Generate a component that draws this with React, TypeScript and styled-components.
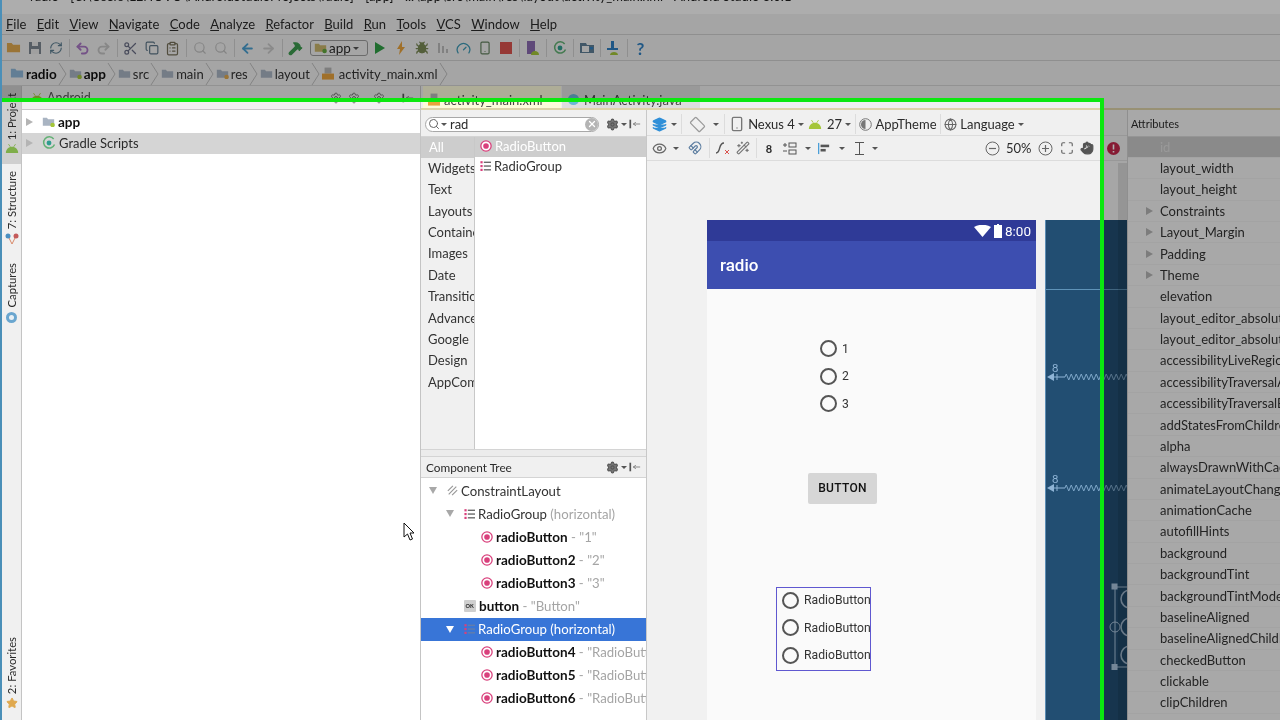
import * as React from 'react';
import styled, { createGlobalStyle } from 'styled-components';
import {
  Bug, Copy, Eye, Gauge, Globe, Hand, Layers, Magnet, Maximize, RefreshCw,
  Scissors, Search, Settings, Smartphone, Wand2, X, ClipboardList, Undo2, Redo2,
  ArrowLeft, ArrowRight, Hammer, Star,
} from 'lucide-react';

const GlobalStyle = createGlobalStyle`
  html, body { margin: 0; padding: 0; background: #f0f0f0; }
  body { font-family: Lato, "Open Sans", "Liberation Sans", sans-serif; font-size: 13px; color: #2b2b2b; }
  * { box-sizing: border-box; }
  svg { flex: none; }
`;

const Screen = styled.div`
  position: relative;
  width: 1280px;
  height: 720px;
  overflow: hidden;
  display: flex;
  flex-direction: column;
  background: #f0f0f0;
  border-left: 2px solid #4a8fb8;
  filter: blur(0.3px);
`;

// spotlight: everything outside the green frame gets dimmed
const Spotlight = styled.div`
  position: absolute;
  left: -20px;
  top: 98px;
  width: 1122px;
  height: 680px;
  border: 4px solid #0be80f;
  box-shadow: 0 0 0 1400px rgba(0, 0, 0, 0.31);
  pointer-events: none;
`;

const Cursor = styled.svg`
  position: absolute;
  left: 401px;
  top: 522px;
`;

const TitleBar = styled.div`
  height: 14px;
  flex: none;
  overflow: hidden;
  padding-left: 28px;
  white-space: nowrap;
  color: #222;
  background: #fbfbfb;
`;

const TitleText = styled.div`
  margin-top: -14px;
  line-height: 20px;
`;

const MenuBar = styled.div`
  height: 21px;
  flex: none;
  display: flex;
  align-items: center;
  gap: 10.4px;
  padding-left: 4px;
  border-bottom: 1px solid #cfcfcf;
`;

const MenuItem = styled.span`
  &::first-letter { text-decoration: underline; }
`;

const ToolBar = styled.div`
  height: 26px;
  flex: none;
  display: flex;
  align-items: center;
  padding: 1px 0 0 1px;
  border-bottom: 1px solid #cfcfcf;
`;

const Tool = styled.span`
  width: 21px;
  height: 20px;
  flex: none;
  display: flex;
  align-items: center;
  justify-content: center;
`;

const HelpMark = styled(Tool)`
  font-size: 17px;
  font-weight: 700;
  color: #2f7fc1;
`;

const ToolSep = styled.span`
  width: 1px;
  height: 18px;
  flex: none;
  margin: 0 2.5px;
  background: #cfcfcf;
`;

const RunConfig = styled.span`
  width: 58px;
  height: 16px;
  flex: none;
  margin: 0 1px 0 4px;
  display: flex;
  align-items: center;
  gap: 2px;
  padding-left: 3px;
  font-size: 13.5px;
  border: 1px solid #9c9c9c;
  border-radius: 3px;
`;

const Caret = styled.span<{ $color?: string }>`
  width: 0;
  height: 0;
  flex: none;
  border-left: 3px solid transparent;
  border-right: 3px solid transparent;
  border-top: 3px solid ${p => p.$color || '#555'};
`;

const BreadcrumbBar = styled.div`
  height: 25px;
  flex: none;
  display: flex;
  align-items: center;
  padding: 1px 0 0 8px;
  gap: 1px;
  border-bottom: 1px solid #d4d4d4;
`;

const Crumb = styled.span<{ $bold?: boolean }>`
  display: flex;
  align-items: center;
  gap: 2px;
  font-size: ${p => (p.$bold ? 13.5 : 13)}px;
  font-weight: ${p => (p.$bold ? 700 : 400)};
  color: ${p => (p.$bold ? '#111' : '#333')};
`;

const Main = styled.div`
  flex: 1;
  min-height: 0;
  display: flex;
`;

const SideStrip = styled.div`
  width: 20px;
  flex: none;
  display: flex;
  flex-direction: column;
  background: #f0f0f0;
  border-right: 1px solid #c4c4c4;
`;

const SideTab = styled.div<{ $active?: boolean; $height: number; $bottom: number }>`
  height: ${p => p.$height}px;
  flex: none;
  display: flex;
  flex-direction: column;
  align-items: center;
  justify-content: flex-end;
  gap: 3px;
  padding-bottom: ${p => p.$bottom}px;
  background: ${p => (p.$active ? '#cfcfcf' : 'transparent')};
`;

const SideLabel = styled.span`
  writing-mode: vertical-rl;
  transform: rotate(180deg);
  font-size: 11.3px;
  white-space: nowrap;
  line-height: 16px;
`;

const SideSpacer = styled.div`
  flex: 1;
`;

const ProjectPanel = styled.div`
  width: 399px;
  flex: none;
  background: #fff;
  border-right: 1px solid #c4c4c4;
`;

const PanelHeader = styled.div`
  height: 24px;
  display: flex;
  align-items: center;
  padding: 0 6px 0 8px;
  gap: 3px;
  background: #f0f0f0;
  border-bottom: 1px solid #c8c8c8;
  font-size: 12.5px;
  color: #555;
`;

const HeaderTools = styled.span<{ $gap: number }>`
  margin-left: auto;
  display: flex;
  align-items: center;
  gap: ${p => p.$gap}px;
`;

const ProjectTree = styled.div`
  padding-top: 1px;
`;

const ProjectRow = styled.div<{ $selected?: boolean }>`
  height: 21.5px;
  display: flex;
  align-items: center;
  gap: 3px;
  padding-left: 4px;
  background: ${p => (p.$selected ? '#d5d5d5' : 'transparent')};
`;

const Arrow = styled.span<{ $open?: boolean; $color?: string }>`
  width: 0;
  height: 0;
  flex: none;
  ${p =>
    p.$open
      ? `border-left: 4px solid transparent; border-right: 4px solid transparent; border-top: 7px solid ${p.$color || '#a8a8a8'};`
      : `border-top: 4px solid transparent; border-bottom: 4px solid transparent; border-left: 7px solid ${p.$color || '#b4b4b4'};`}
`;

const Spacer = styled.span<{ $width: number }>`
  width: ${p => p.$width}px;
  flex: none;
`;

const Strong = styled.b`
  font-size: 13.5px;
  color: #111;
`;

const Editor = styled.div`
  flex: 1;
  min-width: 0;
  display: flex;
  flex-direction: column;
`;

const TabBar = styled.div`
  height: 24px;
  flex: none;
  display: flex;
  padding-left: 2px;
  gap: 1px;
  background: #f0f0f0;
  border-bottom: 2px solid #ddd3a8;
`;

const FileTab = styled.div<{ $active?: boolean }>`
  width: 138px;
  display: flex;
  align-items: center;
  gap: 4px;
  padding: 5px 0 0 ${p => (p.$active ? 5 : 5)}px;
  color: #444;
  background: ${p => (p.$active ? '#fdfbdb' : '#dedede')};
`;

const Workspace = styled.div`
  flex: 1;
  min-height: 0;
  display: flex;
`;

const PalettePanel = styled.div`
  width: 226px;
  flex: none;
  display: flex;
  flex-direction: column;
  background: #f0f0f0;
  border-right: 1px solid #c8c8c8;
`;

const SearchRow = styled.div`
  height: 26.5px;
  flex: none;
  display: flex;
  align-items: center;
  padding: 3px 3px 0 4px;
  border-bottom: 1px solid #d4d4d4;
`;

const SearchBox = styled.div`
  width: 174px;
  height: 15px;
  flex: none;
  display: flex;
  align-items: center;
  gap: 1px;
  padding: 0 0 0 2px;
  background: #fff;
  border: 1px solid #a8a8a8;
  border-radius: 8px;
`;

const SearchText = styled.span`
  margin-left: 2px;
`;

const ClearIcon = styled.span`
  width: 13px;
  height: 13px;
  margin-left: auto;
  display: flex;
  align-items: center;
  justify-content: center;
  border-radius: 50%;
  background: #b4b4b4;
`;

const PaletteTools = styled.span`
  display: flex;
  align-items: center;
  gap: 2px;
  margin-left: 7px;
`;

const PaletteBody = styled.div`
  height: 312.5px;
  flex: none;
  display: flex;
`;

const Categories = styled.div`
  width: 54px;
  flex: none;
  overflow: hidden;
  background: #f0f0f0;
  border-right: 1px solid #c8c8c8;
`;

const Category = styled.div<{ $selected?: boolean }>`
  height: 21.4px;
  line-height: 21px;
  padding-left: ${p => (p.$selected ? 8 : 7)}px;
  white-space: nowrap;
  color: ${p => (p.$selected ? '#fff' : '#333')};
  background: ${p => (p.$selected ? '#cdcdcd' : 'transparent')};
`;

const PaletteList = styled.div`
  flex: 1;
  background: #fff;
`;

const PaletteItem = styled.div<{ $selected?: boolean }>`
  height: 20px;
  display: flex;
  align-items: center;
  gap: 3px;
  padding: 0 0 1px 5px;
  color: ${p => (p.$selected ? '#fff' : '#333')};
  background: ${p => (p.$selected ? '#cdcdcd' : 'transparent')};
`;

const SplitHandle = styled.div`
  height: 7px;
  flex: none;
  background: #ececec;
  border-top: 1px solid #d4d4d4;
`;

const TreeHeader = styled.div`
  height: 22px;
  flex: none;
  display: flex;
  align-items: center;
  padding: 0 5px 0 5px;
  font-size: 11.8px;
  border-top: 1px solid #d4d4d4;
  border-bottom: 1px solid #d4d4d4;
`;

const ComponentTree = styled.div`
  flex: 1;
  padding-top: 1px;
  overflow: hidden;
  background: #fff;
`;

const TreeRow = styled.div<{ $depth: number; $selected?: boolean }>`
  height: 23.1px;
  display: flex;
  align-items: center;
  gap: 3px;
  font-size: 13.2px;
  white-space: nowrap;
  padding-left: ${p => p.$depth}px;
  color: ${p => (p.$selected ? '#fff' : '#333')};
  background: ${p => (p.$selected ? '#3875d7' : 'transparent')};
`;

const ArrowSlot = styled.span`
  width: 13px;
  flex: none;
  display: flex;
  justify-content: center;
`;

const Quiet = styled.span<{ $selected?: boolean }>`
  color: ${p => (p.$selected ? '#fff' : '#a5a5a5')};
`;

const Design = styled.div`
  flex: 1;
  min-width: 0;
  display: flex;
  flex-direction: column;
`;

const DesignToolbar = styled.div<{ $top?: number }>`
  height: ${p => 25 + (p.$top ? 1 : 0)}px;
  flex: none;
  display: flex;
  align-items: center;
  padding: ${p => p.$top || 0}px 0 0 2px;
  border-bottom: 1px solid #dcdcdc;
`;

const DesignTool = styled.span<{ $width?: number }>`
  width: ${p => p.$width || 20}px;
  flex: none;
  display: flex;
  align-items: center;
  justify-content: center;
  gap: 3px;
`;

const EightMark = styled(DesignTool)`
  font-size: 11px;
  font-weight: 700;
`;

const Divider = styled.span`
  width: 1px;
  height: 20px;
  flex: none;
  margin: 0 2px;
  background: #dcdcdc;
`;

const ZoomGroup = styled.span`
  margin-left: auto;
  display: flex;
  align-items: center;
  gap: 6.5px;
  padding-right: 7px;
`;

const Canvas = styled.div`
  position: relative;
  flex: 1;
  min-height: 0;
  display: flex;
  gap: 9px;
  padding: 59px 0 0 60px;
  overflow: hidden;
  background: #f1f1f1;
`;

const ScrollTrack = styled.div`
  position: absolute;
  right: 0;
  top: 2px;
  bottom: 0;
  width: 9px;
  background: rgba(0, 0, 0, 0.1);
`;

const Phone = styled.div`
  width: 329px;
  flex: none;
  display: flex;
  flex-direction: column;
  background: #fafafa;
`;

const StatusBar = styled.div`
  height: 21px;
  flex: none;
  display: flex;
  align-items: center;
  justify-content: flex-end;
  gap: 3px;
  padding: 1px 5px 0 0;
  color: #fff;
  font-family: Roboto, sans-serif;
  font-size: 13.5px;
  background: #2f3a97;
`;

const AppBar = styled.div`
  height: 48px;
  flex: none;
  display: flex;
  align-items: center;
  padding-left: 13px;
  font-family: Roboto, sans-serif;
  font-size: 17px;
  font-weight: 500;
  color: #fff;
  background: #3d4eb0;
`;

const PhoneBody = styled.div`
  flex: 1;
  display: flex;
  flex-direction: column;
  align-items: flex-start;
  font-family: Roboto, sans-serif;
`;

const RadioGroup = styled.div<{ $boxed?: boolean }>`
  width: ${p => (p.$boxed ? '95px' : 'auto')};
  height: ${p => (p.$boxed ? '84px' : 'auto')};
  display: flex;
  flex-direction: column;
  justify-content: center;
  margin-left: ${p => (p.$boxed ? 69 : 113)}px;
  margin-top: ${p => (p.$boxed ? 83 : 46)}px;
  padding-left: ${p => (p.$boxed ? 5 : 0)}px;
  padding-bottom: ${p => (p.$boxed ? 2 : 0)}px;
  border: ${p => (p.$boxed ? '1.5px solid #5f58d0' : 'none')};
`;

const RadioRow = styled.div`
  height: 27.5px;
  flex: none;
  display: flex;
  align-items: center;
  gap: 5px;
  font-size: 12.2px;
  color: #333;
  white-space: nowrap;
`;

const RadioDot = styled.span`
  width: 17px;
  height: 17px;
  flex: none;
  border: 2px solid #555;
  border-radius: 50%;
`;

const PhoneButton = styled.div`
  width: 69px;
  height: 31px;
  margin: 55px 0 0 101px;
  display: flex;
  align-items: center;
  justify-content: center;
  font-size: 12px;
  font-weight: 500;
  letter-spacing: 0.3px;
  color: #111;
  background: #d6d6d6;
  border-radius: 2px;
`;

const Blueprint = styled.div`
  position: relative;
  flex: 1;
  background: #224e72;
  border-left: 1px solid #5b8db5;
`;

const BlueprintLine = styled.div`
  position: absolute;
  left: 0;
  right: 0;
  top: 69px;
  height: 1px;
  background: #5f93b8;
`;

const CanvasMark = styled.svg<{ $top: number; $left: number }>`
  position: absolute;
  left: ${p => p.$left}px;
  top: ${p => p.$top}px;
`;

const AttributesPanel = styled.div`
  width: 153px;
  flex: none;
  overflow: hidden;
  background: #f4f4f4;
  border-left: 1px solid #d0d0d0;
`;

const AttributesHead = styled.div`
  height: 26.5px;
  padding: 7px 0 0 3px;
  font-size: 11px;
  border-bottom: 1px solid #d8d8d8;
`;

const AttrRow = styled.div<{ $selected?: boolean; $arrow?: boolean }>`
  height: 21.38px;
  display: flex;
  align-items: center;
  gap: 7px;
  padding-left: ${p => (p.$arrow ? 18 : 32)}px;
  white-space: nowrap;
  color: ${p => (p.$selected ? '#dedede' : '#333')};
  background: ${p => (p.$selected ? '#c8c8c8' : 'transparent')};
  border-bottom: 1px solid #ececec;
`;

const menus = ['File', 'Edit', 'View', 'Navigate', 'Code', 'Analyze', 'Refactor', 'Build', 'Run', 'Tools', 'VCS', 'Window', 'Help'];
const categories = ['All', 'Widgets', 'Text', 'Layouts', 'Containers', 'Images', 'Date', 'Transitions', 'Advanced', 'Google', 'Design', 'AppCompat'];
const attributes: [string, boolean][] = [
  ['id', false], ['layout_width', false], ['layout_height', false], ['Constraints', true], ['Layout_Margin', true],
  ['Padding', true], ['Theme', true], ['elevation', false], ['layout_editor_absoluteX', false], ['layout_editor_absoluteY', false],
  ['accessibilityLiveRegion', false], ['accessibilityTraversalAfter', false], ['accessibilityTraversalBefore', false],
  ['addStatesFromChildren', false], ['alpha', false], ['alwaysDrawnWithCache', false], ['animateLayoutChanges', false],
  ['animationCache', false], ['autofillHints', false], ['background', false], ['backgroundTint', false],
  ['backgroundTintMode', false], ['baselineAligned', false], ['baselineAlignedChildIndex', false], ['checkedButton', false],
  ['clickable', false], ['clipChildren', false],
];

const FolderIcon = ({ color = '#a9b4c2', dot, width = 13 }: { color?: string; dot?: string; width?: number }) => (
  <svg width={width} height={(width * 14) / 16} viewBox="0 0 16 14">
    <path d="M1 2h5l1.500 2H15v8H1z" fill={color} />
    {dot && <circle cx="13" cy="11" r="2.800" fill={dot} />}
  </svg>
);

const RadioIcon = () => (
  <svg width="12" height="12" viewBox="0 0 14 14">
    <circle cx="7" cy="7" r="6" fill="#fff" stroke="#d9407c" strokeWidth="1.500" />
    <circle cx="7" cy="7" r="3.300" fill="#d9407c" />
  </svg>
);

const ListIcon = ({ light }: { light?: boolean }) => (
  <svg width="11" height="12" viewBox="0 0 13 13">
    {[2, 6.5, 11].map(y => (
      <g key={y}>
        <rect x="0.500" y={y - 1.2} width="2.600" height="2.600" fill="#d9407c" />
        <rect x="4.500" y={y - 0.6} width="8.500" height="1.300" fill={light ? '#6f7f9e' : '#444'} />
      </g>
    ))}
  </svg>
);

const AndroidIcon = ({ color = '#a4c639' }: { color?: string }) => (
  <svg width="14" height="11" viewBox="0 0 16 12">
    <path d="M1 11c0-4 3-7 7-7s7 3 7 7z" fill={color} />
    <path d="M4 1l2 3M12 1l-2 3" stroke={color} strokeWidth="1" />
  </svg>
);

const GradleIcon = () => (
  <svg width="14" height="14" viewBox="0 0 15 15">
    <path d="M12.500 3.200A6 6 0 1 0 13.400 9" fill="none" stroke="#63b175" strokeWidth="1.600" />
    <circle cx="7.500" cy="7.500" r="2.600" fill="#2f9e8f" />
  </svg>
);

const XmlIcon = () => (
  <svg width="12" height="14" viewBox="0 0 14 15">
    <rect x="3" y="0" width="8" height="7" fill="#b7b7b7" />
    <rect x="0" y="7" width="14" height="7" fill="#e8a33d" />
  </svg>
);

const SmallGear = () => (
  <>
    <Settings size={13} color="#555" fill="#777" />
    <Caret />
  </>
);

const CollapseIcon = () => (
  <svg width="12" height="12" viewBox="0 0 14 12">
    <path d="M1.500 1v10" stroke="#555" strokeWidth="2" />
    <path d="M5 6h8M5 6l3-2M5 6l3 2" stroke="#777" strokeWidth="1" fill="none" />
  </svg>
);

const ZoomCircle = ({ plus }: { plus?: boolean }) => (
  <svg width="15" height="15" viewBox="0 0 15 15">
    <circle cx="7.500" cy="7.500" r="6.500" fill="none" stroke="#666" />
    <path d={plus ? 'M4 7.500h7M7.500 4v7' : 'M4 7.500h7'} stroke="#666" strokeWidth="1.200" />
  </svg>
);

const Spring = ({ top }: { top: number }) => (
  <CanvasMark $top={top} $left={0} width="82" height="24" viewBox="0 0 82 24">
    <path d="M1 17l7-4v8z" fill="#8fb4d6" />
    <path d="M5 17h14M11 14v6" stroke="#8fb4d6" fill="none" />
    <path
      d={`M19 17${Array.from({ length: 13 }, () => 'l1.250 -3l2.500 6l1.250 -3').join('')}`}
      stroke="#7ea6c8"
      fill="none"
    />
    <text x="6" y="12" fontSize="11" fill="#8fb4d6" fontFamily="Lato, sans-serif">8</text>
  </CanvasMark>
);

const GroupOutline = () => (
  <CanvasMark $top={362} $left={60} width="82" height="92" viewBox="0 0 82 92">
    <g stroke="#a9c3db" fill="none">
      <path d="M9 5v80M9 5H24M9 85H24" />
      <circle cx="9" cy="45" r="5" />
      <path d="M24 8a9 9 0 0 0 0 18M24 36a9 9 0 0 0 0 18M24 64a9 9 0 0 0 0 18" strokeWidth="1.600" />
    </g>
    <rect x="5.500" y="1.500" width="6" height="6" fill="#a9c3db" />
    <rect x="5.500" y="82" width="6" height="6" fill="#a9c3db" />
  </CanvasMark>
);

const CrumbArrow = () => (
  <svg width="10" height="22" viewBox="0 0 10 22">
    <path d="M1 0l7 11-7 11" fill="none" stroke="#bdbdbd" />
  </svg>
);

const App: React.FC = () => {
  return (
    <Screen>
      <GlobalStyle />
      <TitleBar>
        <TitleText>radio - [C:\Users\LENOVO\AndroidStudioProjects\radio] - [app] - ...\app\src\main\res\layout\activity_main.xml - Android Studio 3.0.1</TitleText>
      </TitleBar>
      <MenuBar>
        {menus.map(m => (
          <MenuItem key={m}>{m}</MenuItem>
        ))}
      </MenuBar>
      <ToolBar>
        <Tool><FolderIcon color="#e0a94f" width={15} /></Tool>
        <Tool><svg width="14" height="14" viewBox="0 0 14 14"><path d="M1 1h12v12H1z" fill="#7d8791" /><rect x="4" y="1" width="6" height="4" fill="#e8e8e8" /><rect x="3" y="8" width="8" height="5" fill="#e8e8e8" /></svg></Tool>
        <Tool><RefreshCw size={14} color="#5e7f92" /></Tool>
        <ToolSep />
        <Tool><Undo2 size={15} color="#a877c4" strokeWidth={3} /></Tool>
        <Tool><Redo2 size={15} color="#c4c4c4" strokeWidth={3} /></Tool>
        <ToolSep />
        <Tool><Scissors size={15} color="#6b6f86" /></Tool>
        <Tool><Copy size={14} color="#5d7587" /></Tool>
        <Tool><ClipboardList size={15} color="#76705a" /></Tool>
        <ToolSep />
        <Tool><Search size={14} color="#c0c0c0" /></Tool>
        <Tool><Search size={14} color="#c0c0c0" /></Tool>
        <ToolSep />
        <Tool><ArrowLeft size={15} color="#4b9fd0" strokeWidth={3} /></Tool>
        <Tool><ArrowRight size={15} color="#c9c9c9" strokeWidth={3} /></Tool>
        <ToolSep />
        <Tool><Hammer size={15} color="#3c9a4e" fill="#3c9a4e" /></Tool>
        <RunConfig><FolderIcon color="#c9b46a" dot="#62a83f" />app<Caret /></RunConfig>
        <Tool><svg width="14" height="14" viewBox="0 0 14 14"><path d="M2 1l10 6-10 6z" fill="#2f9e44" /></svg></Tool>
        <Tool><svg width="12" height="14" viewBox="0 0 12 14"><path d="M7 0L2 8h3l-1 6 6-8H7z" fill="#e8a33d" /></svg></Tool>
        <Tool><Bug size={14} color="#7a8a56" fill="#7a8a56" /></Tool>
        <Tool><svg width="14" height="14" viewBox="0 0 14 14"><path d="M2 2h2v10H2zM6 5h2v7H6zM10 8h2v4h-2z" fill="#bcbcbc" /></svg></Tool>
        <Tool><Gauge size={15} color="#3f9ab5" /></Tool>
        <Tool><Smartphone size={14} color="#62805e" /></Tool>
        <Tool><svg width="14" height="14" viewBox="0 0 14 14"><rect x="1" y="1" width="12" height="12" fill="#d9534f" /></svg></Tool>
        <ToolSep />
        <Tool><svg width="15" height="16" viewBox="0 0 15 16"><rect x="2" y="1" width="8" height="13" fill="#8a6bb0" /><path d="M6 15c0-3 2-4 4-4s4 1 4 4z" fill="#a4c639" /></svg></Tool>
        <ToolSep />
        <Tool><GradleIcon /></Tool>
        <ToolSep />
        <Tool><svg width="16" height="14" viewBox="0 0 16 14"><path d="M1 2h6l1 2h7v8H1z" fill="#5f7f96" /><rect x="3" y="5" width="7" height="6" fill="#f0f0f0" /><rect x="11" y="6" width="3" height="2.400" fill="#2f7fc1" /></svg></Tool>
        <ToolSep />
        <Tool><svg width="16" height="16" viewBox="0 0 16 16"><path d="M5 1h3v7h4v2H1V8h4z" fill="#2f7fc1" /><path d="M4 15c0-2 2-3 4-3s4 1 4 3z" fill="#a4c639" /></svg></Tool>
        <ToolSep />
        <HelpMark>?</HelpMark>
      </ToolBar>
      <BreadcrumbBar>
        <Crumb $bold><FolderIcon color="#8fb7d8" width={14} />radio</Crumb>
        <CrumbArrow />
        <Crumb $bold><FolderIcon dot="#a4c639" />app</Crumb>
        <CrumbArrow />
        <Crumb><FolderIcon />src</Crumb>
        <CrumbArrow />
        <Crumb><FolderIcon />main</Crumb>
        <CrumbArrow />
        <Crumb><FolderIcon dot="#e0a94f" />res</Crumb>
        <CrumbArrow />
        <Crumb><FolderIcon />layout</Crumb>
        <CrumbArrow />
        <Crumb><XmlIcon /><Spacer $width={1} />activity_main.xml</Crumb>
        <CrumbArrow />
      </BreadcrumbBar>
      <Main>
        <SideStrip>
          <SideTab $active $height={78} $bottom={10}>
            <SideLabel>1: Project</SideLabel>
            <AndroidIcon color="#7fae4a" />
          </SideTab>
          <SideTab $height={84} $bottom={2}>
            <SideLabel>7: Structure</SideLabel>
            <svg width="14" height="14" viewBox="0 0 14 14"><path d="M3 4l4 8 4-8" stroke="#d98a6a" fill="none" /><circle cx="3" cy="4" r="2.500" fill="#4a8fc1" /><circle cx="11" cy="4" r="2.500" fill="#c45a5a" /></svg>
          </SideTab>
          <SideTab $height={78} $bottom={2}>
            <SideLabel>Captures</SideLabel>
            <svg width="13" height="13" viewBox="0 0 13 13"><circle cx="6.500" cy="6.500" r="5.500" fill="#6aa6cf" /><circle cx="6.500" cy="6.500" r="2.500" fill="#e8f0f5" /></svg>
          </SideTab>
          <SideSpacer />
          <SideTab $height={90} $bottom={11}>
            <SideLabel>2: Favorites</SideLabel>
            <Star size={12} color="#e0a94f" fill="#e0a94f" />
          </SideTab>
        </SideStrip>

        <ProjectPanel>
          <PanelHeader>
            <AndroidIcon />
            Android
            <HeaderTools $gap={6}>
              <Settings size={12} color="#777" />
              <Settings size={12} color="#777" />
              <Spacer $width={1} />
              <Settings size={12} color="#777" />
              <Spacer $width={5} />
              <CollapseIcon />
            </HeaderTools>
          </PanelHeader>
          <ProjectTree>
            <ProjectRow>
              <Arrow />
              <Spacer $width={3} />
              <FolderIcon dot="#a4c639" />
              <Strong>app</Strong>
            </ProjectRow>
            <ProjectRow $selected>
              <Arrow />
              <Spacer $width={3} />
              <GradleIcon />
              Gradle Scripts
            </ProjectRow>
          </ProjectTree>
        </ProjectPanel>

        <Editor>
          <TabBar>
            <FileTab $active><XmlIcon />activity_main.xml</FileTab>
            <FileTab><svg width="13" height="13" viewBox="0 0 14 14"><circle cx="7" cy="7" r="6" fill="#6bb7d6" /></svg>MainActivity.java</FileTab>
          </TabBar>
          <Workspace>
            <PalettePanel>
              <SearchRow>
                <SearchBox>
                  <Search size={12} color="#666" />
                  <Caret />
                  <SearchText>rad</SearchText>
                  <ClearIcon><X size={10} color="#fff" strokeWidth={3} /></ClearIcon>
                </SearchBox>
                <PaletteTools>
                  <SmallGear />
                  <CollapseIcon />
                </PaletteTools>
              </SearchRow>
              <PaletteBody>
                <Categories>
                  {categories.map((c, i) => (
                    <Category key={c} $selected={i === 0}>{c}</Category>
                  ))}
                </Categories>
                <PaletteList>
                  <PaletteItem $selected><RadioIcon />RadioButton</PaletteItem>
                  <PaletteItem><ListIcon />RadioGroup</PaletteItem>
                </PaletteList>
              </PaletteBody>
              <SplitHandle />
              <TreeHeader>
                Component Tree
                <HeaderTools $gap={2}>
                  <SmallGear />
                  <CollapseIcon />
                </HeaderTools>
              </TreeHeader>
              <ComponentTree>
                <TreeRow $depth={5}>
                  <ArrowSlot><Arrow $open /></ArrowSlot>
                  <Spacer $width={2} />
                  <svg width="11" height="11" viewBox="0 0 13 13"><path d="M1 7l6-6M2 11l9-9M6 12l6-6" stroke="#999" strokeWidth="1.400" /></svg>
                  ConstraintLayout
                </TreeRow>
                <TreeRow $depth={22}>
                  <ArrowSlot><Arrow $open /></ArrowSlot>
                  <Spacer $width={2} />
                  <ListIcon />
                  <span>RadioGroup <Quiet>(horizontal)</Quiet></span>
                </TreeRow>
                {[['radioButton', '1'], ['radioButton2', '2'], ['radioButton3', '3']].map(([id, text]) => (
                  <TreeRow key={id} $depth={60}>
                    <RadioIcon />
                    <span><Strong>{id}</Strong> <Quiet>- "{text}"</Quiet></span>
                  </TreeRow>
                ))}
                <TreeRow $depth={43}>
                  <svg width="12" height="12" viewBox="0 0 12 12"><rect width="12" height="12" rx="1" fill="#cfcfcf" /><text x="1.500" y="8" fontSize="5.500" fontWeight="700" fill="#222" fontFamily="Lato, sans-serif">OK</text></svg>
                  <span><Strong>button</Strong> <Quiet>- "Button"</Quiet></span>
                </TreeRow>
                <TreeRow $depth={22} $selected>
                  <ArrowSlot><Arrow $open $color="#fff" /></ArrowSlot>
                  <Spacer $width={2} />
                  <ListIcon light />
                  <span>RadioGroup <Quiet $selected>(horizontal)</Quiet></span>
                </TreeRow>
                {['radioButton4', 'radioButton5', 'radioButton6'].map(id => (
                  <TreeRow key={id} $depth={60}>
                    <RadioIcon />
                    <span><Strong>{id}</Strong> <Quiet>- "RadioButton"</Quiet></span>
                  </TreeRow>
                ))}
              </ComponentTree>
            </PalettePanel>

            <Design>
              <DesignToolbar $top={3}>
                <DesignTool><Layers size={15} color="#2f8fd8" fill="#2f8fd8" /></DesignTool>
                <DesignTool $width={10}><Caret /></DesignTool>
                <Divider />
                <DesignTool $width={26}><svg width="17" height="17" viewBox="0 0 17 17"><rect x="4.500" y="2" width="8" height="13" rx="1" transform="rotate(-45 8.500 8.500)" fill="none" stroke="#9a9a9a" strokeWidth="1.200" /></svg></DesignTool>
                <DesignTool $width={12}><Caret /></DesignTool>
                <Divider />
                <DesignTool><Smartphone size={16} color="#777" /></DesignTool>
                <DesignTool $width={58}>Nexus 4<Caret /></DesignTool>
                <DesignTool><AndroidIcon /></DesignTool>
                <DesignTool $width={28}>27<Caret /></DesignTool>
                <Divider />
                <DesignTool $width={80}>
                  <svg width="13" height="13" viewBox="0 0 13 13"><circle cx="6.500" cy="6.500" r="5.800" fill="none" stroke="#777" /><path d="M6.500 2a4.500 4.500 0 0 0 0 9z" fill="#777" /></svg>
                  AppTheme
                </DesignTool>
                <Divider />
                <DesignTool $width={82}><Globe size={13} color="#666" />Language<Caret /></DesignTool>
              </DesignToolbar>
              <DesignToolbar>
                <DesignTool><Eye size={15} color="#666" /></DesignTool>
                <DesignTool $width={14}><Caret /></DesignTool>
                <DesignTool $width={24}><Magnet size={14} color="#5c7da0" /></DesignTool>
                <Divider />
                <DesignTool><svg width="15" height="14" viewBox="0 0 15 14"><path d="M1 12c5 0 2-10 8-10" stroke="#555" strokeWidth="1.400" fill="none" /><path d="M10 9l4 4M14 9l-4 4" stroke="#d9534f" /></svg></DesignTool>
                <DesignTool $width={22}><Wand2 size={14} color="#777" /></DesignTool>
                <Divider />
                <EightMark>8</EightMark>
                <DesignTool $width={22}><svg width="14" height="13" viewBox="0 0 14 13"><path d="M2 1v4M0 3h4M0 9h4" stroke="#555" /><rect x="6" y="1" width="7" height="4" fill="none" stroke="#555" /><rect x="6" y="8" width="7" height="4" fill="none" stroke="#555" /></svg></DesignTool>
                <DesignTool $width={14}><Caret /></DesignTool>
                <DesignTool $width={18}><svg width="12" height="13" viewBox="0 0 14 13"><rect x="0" y="0" width="1.500" height="13" fill="#4a9fd8" /><rect x="3" y="2" width="10" height="3" fill="#555" /><rect x="3" y="7" width="6" height="3" fill="#555" /></svg></DesignTool>
                <DesignTool $width={18}><Caret /></DesignTool>
                <DesignTool $width={16}><svg width="9" height="13" viewBox="0 0 9 13"><path d="M0 .5h9M0 12.500h9M4.500 1v11" stroke="#555" /></svg></DesignTool>
                <DesignTool $width={16}><Caret /></DesignTool>
                <ZoomGroup>
                  <ZoomCircle />
                  <span>50%</span>
                  <ZoomCircle plus />
                  <Maximize size={14} color="#666" />
                  <Hand size={14} color="#555" fill="#555" />
                  <Spacer $width={0} />
                  <svg width="13" height="13" viewBox="0 0 13 13"><circle cx="6.500" cy="6.500" r="6.500" fill="#c2284c" /><path d="M6.500 2.500v5M6.500 9v1.500" stroke="#fff" strokeWidth="1.600" /></svg>
                </ZoomGroup>
              </DesignToolbar>
              <Canvas>
                <Phone>
                  <StatusBar>
                    <svg width="17" height="12" viewBox="0 0 17 12"><path d="M0 2c5-3 12-3 17 0l-8.500 10z" fill="#fff" /></svg>
                    <svg width="8" height="14" viewBox="0 0 8 14"><path d="M3 0h2v1h3v13H0V1h3z" fill="#fff" /></svg>
                    <span>8:00</span>
                  </StatusBar>
                  <AppBar>radio</AppBar>
                  <PhoneBody>
                    <RadioGroup>
                      {['1', '2', '3'].map(t => (
                        <RadioRow key={t}><RadioDot />{t}</RadioRow>
                      ))}
                    </RadioGroup>
                    <PhoneButton>BUTTON</PhoneButton>
                    <RadioGroup $boxed>
                      {['a', 'b', 'c'].map(t => (
                        <RadioRow key={t}><RadioDot />RadioButton</RadioRow>
                      ))}
                    </RadioGroup>
                  </PhoneBody>
                </Phone>
                <Blueprint>
                  <BlueprintLine />
                  <Spring top={140} />
                  <Spring top={251} />
                  <GroupOutline />
                </Blueprint>
                <ScrollTrack />
              </Canvas>
            </Design>

            <AttributesPanel>
              <AttributesHead>Attributes</AttributesHead>
              {attributes.map(([name, group], i) => (
                <AttrRow key={name} $selected={i === 0} $arrow={group}>
                  {group && <Arrow />}
                  {name}
                </AttrRow>
              ))}
            </AttributesPanel>
          </Workspace>
        </Editor>
      </Main>
      <Spotlight />
      <Cursor width="12" height="20" viewBox="0 0 12 20">
        <path d="M1 1v14l3.500-3 2.500 6 2.500-1-2.500-6H11z" fill="#fff" stroke="#111" />
      </Cursor>
    </Screen>
  );
};

export default App;
